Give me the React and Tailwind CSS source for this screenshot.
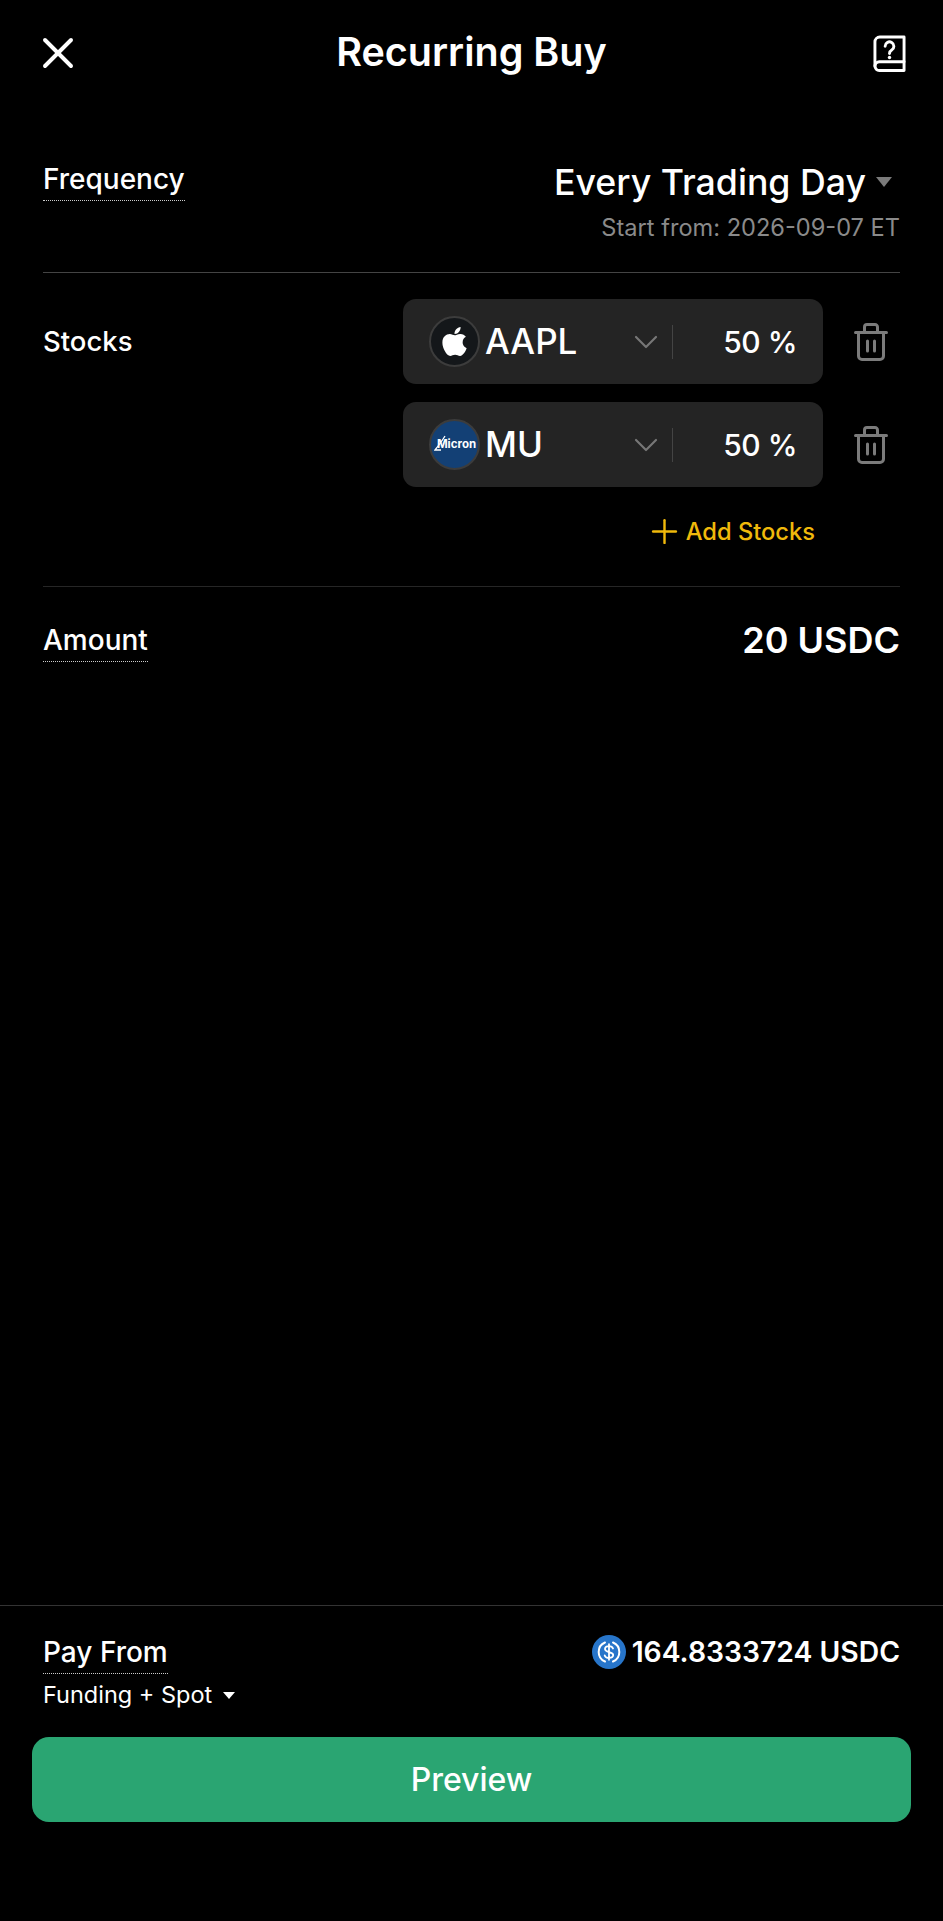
import React from 'react';
import { FaApple } from 'react-icons/fa';
import { X, ChevronDown, Plus } from 'lucide-react';

function BookIcon() {
    return (
        <svg width="33" height="37" viewBox="0 0 34 38" fill="none" stroke="white" strokeWidth="3" strokeLinecap="round" strokeLinejoin="round">
            <path d="M32 2H7a5 5 0 0 0-5 5v25a4.500 4.500 0 0 0 4.500 4.500H32z" />
            <path d="M2 32a4.500 4.500 0 0 1 4.500-4.500H32" />
            <path d="M12.500 11.500a4.500 4.500 0 1 1 6.800 3.900c-1.700 1-2.300 1.800-2.300 3.600" />
            <path d="M17 23v.2" strokeWidth="3.500" />
        </svg>
    );
}

function TrashIcon() {
    return (
        <svg width="34" height="38" viewBox="0 0 34 38" fill="none" stroke="#7b7b7b" strokeWidth="3" strokeLinecap="round" strokeLinejoin="round">
            <path d="M1.500 9.500h31" />
            <path d="M4.500 9.500V33a3.500 3.500 0 0 0 3.500 3.500h18a3.500 3.500 0 0 0 3.500-3.500V9.500" />
            <path d="M10.500 9.500V4a2.500 2.500 0 0 1 2.500-2.500h8A2.500 2.500 0 0 1 23.500 4v5.500" />
            <path d="M13.500 18v10M20.500 18v10" />
        </svg>
    );
}

function UsdcIcon() {
    return (
        <svg width="34" height="34" viewBox="0 0 34 34" fill="none">
            <circle cx="17" cy="17" r="17" fill="#2775ca" />
            <path d="M13 7.500a10.300 10.300 0 0 0 0 19M21 7.500a10.300 10.300 0 0 1 0 19" stroke="white" strokeWidth="2" strokeLinecap="round" />
            <path d="M21 13.500c-.5-1.500-2-2.300-4-2.300-2.300 0-4 1.100-4 2.900 0 4 8.200 2 8.200 6 0 1.800-1.800 2.800-4.200 2.800-2.200 0-3.800-.9-4.300-2.500M17 9.200v15.600" stroke="white" strokeWidth="1.800" strokeLinecap="round" />
        </svg>
    );
}

function StockRow({ symbol, logo }) {
    return (
        <div className="flex items-center">
            <div className="w-[420px] h-[85px] rounded-[13px] bg-[#242424] flex items-center pl-[26px]">
                {logo}
                <span className="ml-[5px] w-[141px] text-[35px] leading-none text-white font-medium">{symbol}</span>
                <ChevronDown className="w-[40px] h-[40px] text-[#777777]" strokeWidth={1.3} />
                <div className="ml-[6px] w-px h-[34px] bg-[#444444]"></div>
                <span className="ml-auto mr-[26px] text-[30px] tracking-[-0.5px] leading-none text-white font-medium">50 %</span>
            </div>
            <div className="ml-[31px]">
                <TrashIcon />
            </div>
        </div>
    );
}

function DottedLabel({ children }) {
    return (
        <span className="inline-block text-[28px] leading-[36px] text-white font-medium border-b border-dotted border-[#cccccc] pb-[3px]">
            {children}
        </span>
    );
}

function App() {
    return (
        <div className="h-[1921px] bg-black flex flex-col font-['Inter',sans-serif]">
            <div className="grid grid-cols-[1fr_auto_1fr] items-center px-[32px] pt-[27px] h-[74px]">
                <X className="w-[52px] h-[52px] text-white" strokeWidth={1.8} />
                <span className="text-[39.5px] leading-none font-semibold text-white">Recurring Buy</span>
                <div className="flex justify-end mr-[5px]">
                    <BookIcon />
                </div>
            </div>

            <div className="mx-[43px] mt-[85px] h-[114px] flex justify-between border-b border-[#444444]">
                <div className="pt-[2px]">
                    <DottedLabel>Frequency</DottedLabel>
                </div>
                <div className="flex flex-col items-end">
                    <div className="flex items-center pt-[1px] pr-[8px]">
                        <span className="text-[35.7px] leading-[44px] text-white font-medium">Every Trading Day</span>
                        <span className="ml-[10px] w-0 h-0 border-l-[8px] border-r-[8px] border-t-[10px] border-l-transparent border-r-transparent border-t-[#7b7b7b]"></span>
                    </div>
                    <span className="mt-[9px] text-[23.6px] leading-[30px] text-[#8a8a8a]">Start from: 2026-09-07 ET</span>
                </div>
            </div>

            <div className="mx-[43px] pt-[26px] h-[314px] flex justify-between border-b border-[#262626]">
                <span className="text-[27.5px] leading-[36px] mt-[24px] text-white font-medium">Stocks</span>
                <div className="flex flex-col items-end mr-[12px]">
                    <div className="flex flex-col gap-[18px]">
                        <StockRow
                            symbol="AAPL"
                            logo={
                                <div className="w-[51px] h-[51px] shrink-0 rounded-full bg-[#14171a] border-2 border-[#3c3c3c] flex items-center justify-center">
                                    <FaApple className="w-[33px] h-[33px] text-white" />
                                </div>
                            }
                        />
                        <StockRow
                            symbol="MU"
                            logo={
                                <div className="relative w-[51px] h-[51px] shrink-0 rounded-full bg-[#134075] border-2 border-[#3c3c3c] flex items-center justify-center overflow-hidden">
                                    <span className="pl-[4px] text-[11.5px] leading-none font-bold text-white">Micron</span>
                                    <svg className="absolute left-[3px] top-[14px]" width="14" height="18" viewBox="0 0 14 18" fill="none" stroke="white" strokeWidth="1.3">
                                        <path d="M11 1C8 6 5 10 1 15h6" />
                                    </svg>
                                </div>
                            }
                        />
                    </div>
                    <div className="mt-[25px] mr-[73px] flex items-center">
                        <Plus className="w-[39px] h-[39px] text-[#f0b90b]" strokeWidth={1.5} />
                        <span className="ml-[2px] text-[23.7px] leading-none text-[#f0b90b] font-medium">Add Stocks</span>
                    </div>
                </div>
            </div>

            <div className="mx-[43px] mt-[35px] flex justify-between items-start">
                <DottedLabel>Amount</DottedLabel>
                <span className="text-[36px] leading-[36px] text-white font-semibold">20 USDC</span>
            </div>

            <div className="mt-auto border-t border-[#333333] pt-[28px] h-[316px]">
                <div className="mx-[43px] flex justify-between items-start">
                    <div className="flex flex-col items-start">
                        <DottedLabel>Pay From</DottedLabel>
                        <div className="mt-[6px] flex items-center">
                            <span className="text-[23.5px] leading-[30px] text-white">Funding + Spot</span>
                            <span className="ml-[11px] w-0 h-0 border-l-[6px] border-r-[6px] border-t-[7px] border-l-transparent border-r-transparent border-t-white"></span>
                        </div>
                    </div>
                    <div className="flex items-center">
                        <UsdcIcon />
                        <span className="ml-[6px] text-[28.3px] leading-[36px] text-white font-semibold">164.8333724 USDC</span>
                    </div>
                </div>
                <div className="mx-[32px] mt-[27px] h-[85px] rounded-[17px] bg-[#2aa572] flex items-center justify-center">
                    <span className="text-[32px] leading-none text-white font-medium">Preview</span>
                </div>
            </div>
        </div>
    );
}

export default App;
